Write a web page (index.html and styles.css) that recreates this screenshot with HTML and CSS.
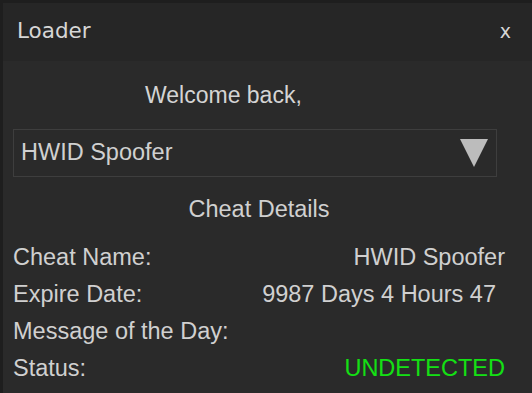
FILE: index.html
```
<!DOCTYPE html>
<html>
<head>
<meta charset="utf-8">
<link rel="stylesheet" href="styles.css">
</head>
<body>
<div class="window">
  <div class="titlebar">
    <span class="title">Loader</span>
    <span class="close">x</span>
  </div>
  <div class="content">
    <div class="welcome">Welcome back,</div>
    <div class="select">
      <span class="select-text">HWID Spoofer</span>
      <svg class="arrow" width="28" height="28" viewBox="0 0 28 28"><polygon points="0,0 28,0 14,28" fill="#bcbcbc"/></svg>
    </div>
    <div class="section">Cheat Details</div>
    <div class="row"><span>Cheat Name:</span><span>HWID Spoofer</span></div>
    <div class="row"><span>Expire Date:</span><span class="expire">9987 Days 4 Hours 47</span></div>
    <div class="row"><span>Message of the Day:</span><span></span></div>
    <div class="row"><span>Status:</span><span class="status">UNDETECTED</span></div>
  </div>
</div>
</body>
</html>
```
FILE: styles.css
```
html, body {
  margin: 0;
  padding: 0;
  background: #1e1e1e;
  height: 393px;
  overflow: hidden;
}
.window {
  margin: 3px 0 0 3px;
  width: 529px;
  height: 390px;
  background: #2a2a2a;
  color: #d0d0d0;
  font-family: "Liberation Sans", Arial, sans-serif;
}
.titlebar {
  height: 58px;
  box-sizing: border-box;
  background: #262626;
  display: flex;
  justify-content: space-between;
  align-items: flex-start;
  padding: 15px 21px 0 14px;
  line-height: 26px;
}
.title {
  font-family: "DejaVu Sans", sans-serif;
  font-size: 21.5px;
  color: #d6d6d6;
}
.close {
  font-family: "DejaVu Sans", sans-serif;
  font-size: 19px;
  color: #d6d6d6;
}
.content {
  padding: 0 27px 0 10px;
  font-size: 23.5px;
}
.welcome {
  font-size: 23px;
  line-height: 30px;
  margin-top: 19px;
  padding-left: 132px;
  color: #d4d4d4;
}
.select {
  margin: 19px 8px 0 0;
  height: 48px;
  box-sizing: border-box;
  border: 1px solid #3e3e3e;
  display: flex;
  align-items: center;
  justify-content: space-between;
  padding: 0 8px 0 7px;
  line-height: 46px;
}
.select-text {
  position: relative;
  top: -1px;
}
.arrow {
  display: block;
}
.section {
  text-align: center;
  line-height: 37px;
  margin-top: 14px;
  margin-bottom: 11px;
}
.row {
  display: flex;
  justify-content: space-between;
  line-height: 37px;
}
.expire {
  padding-right: 9px;
}
.status {
  color: #14e014;
}
```
